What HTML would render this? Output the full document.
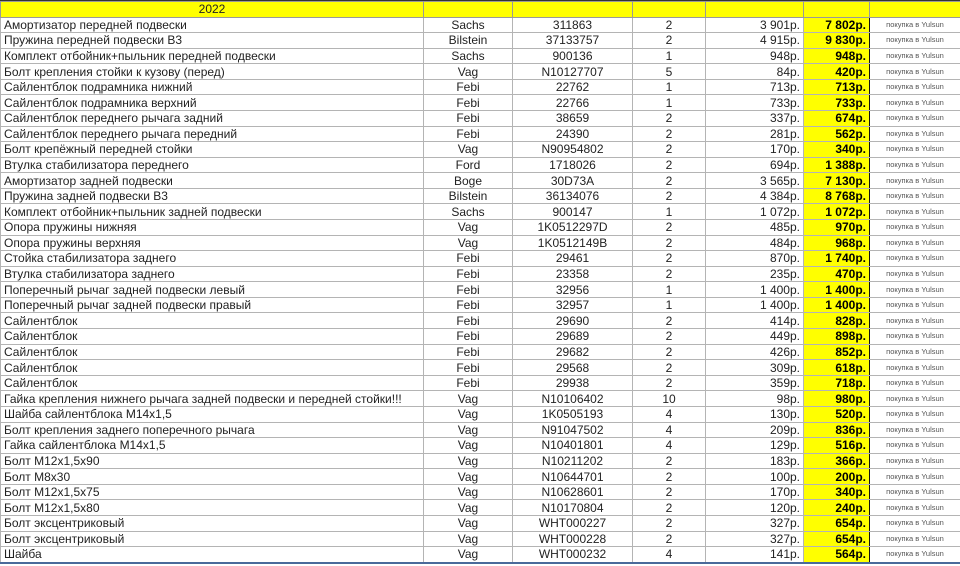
<!DOCTYPE html>
<html><head><meta charset="utf-8"><style>
html,body{margin:0;padding:0;background:#fff;width:960px;height:566px;overflow:hidden}
body{border-top:1px solid #333;box-sizing:border-box}
table{border-collapse:collapse;table-layout:fixed;width:960px;font-family:"Liberation Sans",Arial,sans-serif;font-size:12px;color:#222}
td{border:1px solid #b4b4b4;padding:0 3px;height:14.58px;line-height:14px;white-space:nowrap;overflow:hidden}
tr.h td{background:#ffff00;height:14.5px;border-color:#999}
td.b,td.d{text-align:center}
td.e{text-align:right}
td.f{background:#ffff00;text-align:right;font-weight:bold;color:#000;border-left:1.5px solid #111;border-right:1.5px solid #111}
td.g{text-align:center;font-size:7.5px;color:#555}
tr:last-child td{border-bottom:2px solid #4a6a9a}
</style></head><body>
<table>
<colgroup><col style="width:423px"><col style="width:89px"><col style="width:120px"><col style="width:73px"><col style="width:98px"><col style="width:66px"><col style="width:91px"></colgroup>
<tr class="h"><td style="text-align:center">2022</td><td></td><td></td><td></td><td></td><td class="f" style="background:#ff0"></td><td></td></tr>
<tr><td>Амортизатор передней подвески</td><td class="b">Sachs</td><td class="d">311863</td><td class="d">2</td><td class="e">3 901р.</td><td class="f">7 802р.</td><td class="g">покупка в Yulsun</td></tr>
<tr><td>Пружина передней подвески B3</td><td class="b">Bilstein</td><td class="d">37133757</td><td class="d">2</td><td class="e">4 915р.</td><td class="f">9 830р.</td><td class="g">покупка в Yulsun</td></tr>
<tr><td>Комплект отбойник+пыльник передней подвески</td><td class="b">Sachs</td><td class="d">900136</td><td class="d">1</td><td class="e">948р.</td><td class="f">948р.</td><td class="g">покупка в Yulsun</td></tr>
<tr><td>Болт крепления стойки к кузову (перед)</td><td class="b">Vag</td><td class="d">N10127707</td><td class="d">5</td><td class="e">84р.</td><td class="f">420р.</td><td class="g">покупка в Yulsun</td></tr>
<tr><td>Сайлентблок подрамника нижний</td><td class="b">Febi</td><td class="d">22762</td><td class="d">1</td><td class="e">713р.</td><td class="f">713р.</td><td class="g">покупка в Yulsun</td></tr>
<tr><td>Сайлентблок подрамника верхний</td><td class="b">Febi</td><td class="d">22766</td><td class="d">1</td><td class="e">733р.</td><td class="f">733р.</td><td class="g">покупка в Yulsun</td></tr>
<tr><td>Сайлентблок переднего рычага задний</td><td class="b">Febi</td><td class="d">38659</td><td class="d">2</td><td class="e">337р.</td><td class="f">674р.</td><td class="g">покупка в Yulsun</td></tr>
<tr><td>Сайлентблок переднего рычага передний</td><td class="b">Febi</td><td class="d">24390</td><td class="d">2</td><td class="e">281р.</td><td class="f">562р.</td><td class="g">покупка в Yulsun</td></tr>
<tr><td>Болт крепёжный передней стойки</td><td class="b">Vag</td><td class="d">N90954802</td><td class="d">2</td><td class="e">170р.</td><td class="f">340р.</td><td class="g">покупка в Yulsun</td></tr>
<tr><td>Втулка стабилизатора переднего</td><td class="b">Ford</td><td class="d">1718026</td><td class="d">2</td><td class="e">694р.</td><td class="f">1 388р.</td><td class="g">покупка в Yulsun</td></tr>
<tr><td>Амортизатор задней подвески</td><td class="b">Boge</td><td class="d">30D73A</td><td class="d">2</td><td class="e">3 565р.</td><td class="f">7 130р.</td><td class="g">покупка в Yulsun</td></tr>
<tr><td>Пружина задней подвески B3</td><td class="b">Bilstein</td><td class="d">36134076</td><td class="d">2</td><td class="e">4 384р.</td><td class="f">8 768р.</td><td class="g">покупка в Yulsun</td></tr>
<tr><td>Комплект отбойник+пыльник задней подвески</td><td class="b">Sachs</td><td class="d">900147</td><td class="d">1</td><td class="e">1 072р.</td><td class="f">1 072р.</td><td class="g">покупка в Yulsun</td></tr>
<tr><td>Опора пружины нижняя</td><td class="b">Vag</td><td class="d">1K0512297D</td><td class="d">2</td><td class="e">485р.</td><td class="f">970р.</td><td class="g">покупка в Yulsun</td></tr>
<tr><td>Опора пружины верхняя</td><td class="b">Vag</td><td class="d">1K0512149B</td><td class="d">2</td><td class="e">484р.</td><td class="f">968р.</td><td class="g">покупка в Yulsun</td></tr>
<tr><td>Стойка стабилизатора заднего</td><td class="b">Febi</td><td class="d">29461</td><td class="d">2</td><td class="e">870р.</td><td class="f">1 740р.</td><td class="g">покупка в Yulsun</td></tr>
<tr><td>Втулка стабилизатора заднего</td><td class="b">Febi</td><td class="d">23358</td><td class="d">2</td><td class="e">235р.</td><td class="f">470р.</td><td class="g">покупка в Yulsun</td></tr>
<tr><td>Поперечный рычаг задней подвески левый</td><td class="b">Febi</td><td class="d">32956</td><td class="d">1</td><td class="e">1 400р.</td><td class="f">1 400р.</td><td class="g">покупка в Yulsun</td></tr>
<tr><td>Поперечный рычаг задней подвески правый</td><td class="b">Febi</td><td class="d">32957</td><td class="d">1</td><td class="e">1 400р.</td><td class="f">1 400р.</td><td class="g">покупка в Yulsun</td></tr>
<tr><td>Сайлентблок</td><td class="b">Febi</td><td class="d">29690</td><td class="d">2</td><td class="e">414р.</td><td class="f">828р.</td><td class="g">покупка в Yulsun</td></tr>
<tr><td>Сайлентблок</td><td class="b">Febi</td><td class="d">29689</td><td class="d">2</td><td class="e">449р.</td><td class="f">898р.</td><td class="g">покупка в Yulsun</td></tr>
<tr><td>Сайлентблок</td><td class="b">Febi</td><td class="d">29682</td><td class="d">2</td><td class="e">426р.</td><td class="f">852р.</td><td class="g">покупка в Yulsun</td></tr>
<tr><td>Сайлентблок</td><td class="b">Febi</td><td class="d">29568</td><td class="d">2</td><td class="e">309р.</td><td class="f">618р.</td><td class="g">покупка в Yulsun</td></tr>
<tr><td>Сайлентблок</td><td class="b">Febi</td><td class="d">29938</td><td class="d">2</td><td class="e">359р.</td><td class="f">718р.</td><td class="g">покупка в Yulsun</td></tr>
<tr><td>Гайка крепления нижнего рычага задней подвески и передней стойки!!!</td><td class="b">Vag</td><td class="d">N10106402</td><td class="d">10</td><td class="e">98р.</td><td class="f">980р.</td><td class="g">покупка в Yulsun</td></tr>
<tr><td>Шайба сайлентблока М14х1,5</td><td class="b">Vag</td><td class="d">1K0505193</td><td class="d">4</td><td class="e">130р.</td><td class="f">520р.</td><td class="g">покупка в Yulsun</td></tr>
<tr><td>Болт крепления заднего поперечного рычага</td><td class="b">Vag</td><td class="d">N91047502</td><td class="d">4</td><td class="e">209р.</td><td class="f">836р.</td><td class="g">покупка в Yulsun</td></tr>
<tr><td>Гайка сайлентблока М14х1,5</td><td class="b">Vag</td><td class="d">N10401801</td><td class="d">4</td><td class="e">129р.</td><td class="f">516р.</td><td class="g">покупка в Yulsun</td></tr>
<tr><td>Болт М12х1,5х90</td><td class="b">Vag</td><td class="d">N10211202</td><td class="d">2</td><td class="e">183р.</td><td class="f">366р.</td><td class="g">покупка в Yulsun</td></tr>
<tr><td>Болт М8х30</td><td class="b">Vag</td><td class="d">N10644701</td><td class="d">2</td><td class="e">100р.</td><td class="f">200р.</td><td class="g">покупка в Yulsun</td></tr>
<tr><td>Болт М12х1,5х75</td><td class="b">Vag</td><td class="d">N10628601</td><td class="d">2</td><td class="e">170р.</td><td class="f">340р.</td><td class="g">покупка в Yulsun</td></tr>
<tr><td>Болт М12х1,5х80</td><td class="b">Vag</td><td class="d">N10170804</td><td class="d">2</td><td class="e">120р.</td><td class="f">240р.</td><td class="g">покупка в Yulsun</td></tr>
<tr><td>Болт эксцентриковый</td><td class="b">Vag</td><td class="d">WHT000227</td><td class="d">2</td><td class="e">327р.</td><td class="f">654р.</td><td class="g">покупка в Yulsun</td></tr>
<tr><td>Болт эксцентриковый</td><td class="b">Vag</td><td class="d">WHT000228</td><td class="d">2</td><td class="e">327р.</td><td class="f">654р.</td><td class="g">покупка в Yulsun</td></tr>
<tr><td>Шайба</td><td class="b">Vag</td><td class="d">WHT000232</td><td class="d">4</td><td class="e">141р.</td><td class="f">564р.</td><td class="g">покупка в Yulsun</td></tr>
</table>
</body></html>
